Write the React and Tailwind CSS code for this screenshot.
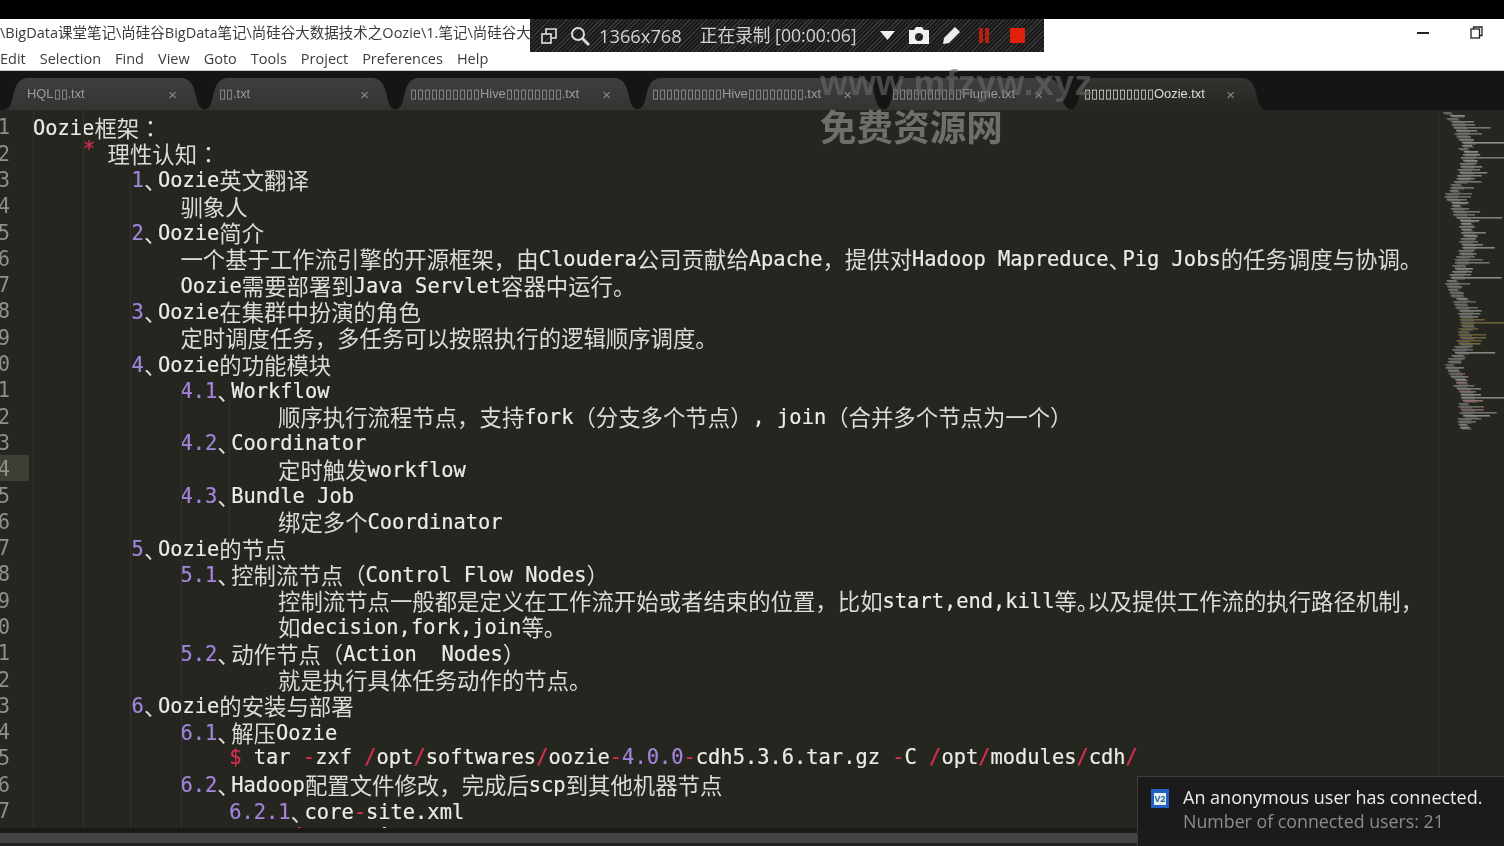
import React from "react";

const LINES = [
  [0, "Oozie框架："],
  [1, "* 理性认知："],
  [2, "1、Oozie英文翻译"],
  [3, "驯象人"],
  [2, "2、Oozie简介"],
  [3, "一个基于工作流引擎的开源框架，由Cloudera公司贡献给Apache，提供对Hadoop Mapreduce、Pig Jobs的任务调度与协调。"],
  [3, "Oozie需要部署到Java Servlet容器中运行。"],
  [2, "3、Oozie在集群中扮演的角色"],
  [3, "定时调度任务，多任务可以按照执行的逻辑顺序调度。"],
  [2, "4、Oozie的功能模块"],
  [3, "4.1、Workflow"],
  [5, "顺序执行流程节点，支持fork（分支多个节点）, join（合并多个节点为一个）"],
  [3, "4.2、Coordinator"],
  [5, "定时触发workflow"],
  [3, "4.3、Bundle Job"],
  [5, "绑定多个Coordinator"],
  [2, "5、Oozie的节点"],
  [3, "5.1、控制流节点（Control Flow Nodes）"],
  [5, "控制流节点一般都是定义在工作流开始或者结束的位置，比如start,end,kill等。以及提供工作流的执行路径机制，"],
  [5, "如decision,fork,join等。"],
  [3, "5.2、动作节点（Action  Nodes）"],
  [5, "就是执行具体任务动作的节点。"],
  [2, "6、Oozie的安装与部署"],
  [3, "6.1、解压Oozie"],
  [4, "$ tar -zxf /opt/softwares/oozie-4.0.0-cdh5.3.6.tar.gz -C /opt/modules/cdh/"],
  [3, "6.2、Hadoop配置文件修改，完成后scp到其他机器节点"],
  [4, "6.2.1、core-site.xml"],
];

const TOKEN = /(、)|(：)|(。(?=\S))|(\*)|([\u3000-\u303f\u4e00-\u9fff\uff00-\uffef]+?(?=、|：|。\S|[^\u3000-\u303f\u4e00-\u9fff\uff00-\uffef]|$))|((?<![A-Za-z0-9.])\d+(?:\.\d+)*)|([-/$])|([^、：。*\u3000-\u303f\u4e00-\u9fff\uff00-\uffef\d\-/$]+|\d)/g;

const CJK = "relative top-[2px] text-[22.4px] text-[#dcdcd6] [-webkit-text-stroke:0px] [font-family:'Noto_Sans_CJK_SC',sans-serif]";

function Code({ text }) {
  const parts = [...text.matchAll(TOKEN)];
  return parts.map((m, i) => {
    if (m[1]) return <span key={i} className={`${CJK} tracking-[-8.4px]`}>、</span>;
    if (m[2]) return <span key={i} className="relative top-[2px] text-[22.4px] text-[#dcdcd6] [-webkit-text-stroke:0px] [font-family:'Noto_Sans_CJK_TC',sans-serif]">：</span>;
    if (m[3]) return <span key={i} className={`${CJK} tracking-[-12px]`}>。</span>;
    if (m[4]) return <span key={i} className="relative -top-[5px] text-[#d92f50]">*</span>;
    if (m[5]) return <span key={i} className={CJK}>{m[5]}</span>;
    if (m[6]) return <span key={i} className="text-[#a284dc]">{m[6]}</span>;
    if (m[7]) return <span key={i} className="text-[#d92f50]">{m[7]}</span>;
    return <span key={i}>{m[0]}</span>;
  });
}

const MENU = ["Edit", "Selection", "Find", "View", "Goto", "Tools", "Project", "Preferences", "Help"];

const B = "\u25AF";
const TABS = [
  { name: `HQL${B}${B}.txt`, w: 205, pl: 25, pr: 30 },
  { name: `${B}${B}.txt`, w: 196, pl: 17, pr: 29 },
  { name: `${B.repeat(10)}Hive${B.repeat(8)}.txt`, w: 247, pl: 17, pr: 29 },
  { name: `${B.repeat(10)}Hive${B.repeat(8)}.txt`, w: 251, pl: 17, pr: 34 },
  { name: `${B.repeat(10)}Flume.txt`, w: 192, pl: 11, pr: 30 },
  { name: `${B.repeat(10)}Oozie.txt`, w: 200, pl: 16, pr: 33, active: true },
];

function Tab({ tab, first }) {
  const w = tab.w;
  const d = `M0,32 C7,32 9,27 11,19 C13,8 16,0 27,0 H${w - 27} C${w - 16},0 ${w - 13},8 ${w - 11},19 C${w - 9},27 ${w - 7},32 ${w},32 Z`;
  return (
    <div className={`relative h-[32px] shrink-0 flex items-center justify-between ${first ? "ml-[2px]" : "-ml-[5px]"}`} style={{ width: w, paddingLeft: tab.pl, paddingRight: tab.pr }}>
      <svg className="absolute inset-0" width={w} height="32" viewBox={`0 0 ${w} 32`}>
        <defs>
          <linearGradient id={`tabg${w}${tab.pl}`} x1="0" y1="0" x2="0" y2="1">
            <stop offset="0" stopColor={tab.active ? "#33332f" : "#3e3e3c"} />
            <stop offset="1" stopColor={tab.active ? "#262621" : "#343432"} />
          </linearGradient>
        </defs>
        <path d={d} fill={`url(#tabg${w}${tab.pl})`} />
      </svg>
      <span className={`relative text-[12.9px] whitespace-nowrap [font-family:'Liberation_Sans',sans-serif] ${tab.active ? "text-[#dedede]" : "text-[#9c9c9a]"}`}>{tab.name}</span>
      <span className="relative text-[15px] leading-none text-[#8a8a88] [font-family:'Liberation_Sans',sans-serif]">×</span>
    </div>
  );
}

function Minimap() {
  const rows = [];
  for (let i = 0; i < 106; i++) {
    const s = Math.sin(i * 12.9898) * 43758.5453;
    const r = s - Math.floor(s);
    const s2 = Math.sin(i * 78.233) * 12543.11;
    const r2 = s2 - Math.floor(s2);
    const indent = 3 + 15 * Math.abs(Math.sin(i / 9)) + r * 6;
    const w = 8 + r2 * (i % 5 === 0 ? 44 : 20);
    const tint = i > 68 && i < 78 ? "#8a7a40" : i > 82 && i < 100 && i % 3 === 0 ? "#a07a70" : "#9a9a96";
    rows.push(<rect key={i} x={indent} y={i * 3} width={w} height="1.6" fill={tint} opacity={0.55 + r * 0.35} />);
    rows.push(<rect key={`b${i}`} x={indent + 2} y={i * 3 + 1.4} width={Math.min(w, 12)} height="1.2" fill="#8a8a90" opacity="0.6" />);
  }
  return (
    <svg width="64" height="320" viewBox="0 0 64 320" className="absolute left-[1440px] top-[2px]">
      {rows}
    </svg>
  );
}

export default function App() {
  return (
    <div className="relative w-[1504px] h-[846px] overflow-hidden bg-black flex flex-col blur-[0.45px] [font-family:'Open_Sans','Noto_Sans_CJK_SC',sans-serif]">
      <div className="h-[19px] shrink-0 bg-black" />

      <div className="h-[27px] shrink-0 bg-white flex items-center justify-between overflow-hidden">
        <div className="w-[530px] overflow-hidden whitespace-nowrap text-[14.5px] text-[#3a3a3a] [font-family:'Open_Sans','Noto_Sans_CJK_SC',sans-serif]">
          \BigData课堂笔记\尚硅谷BigData笔记\尚硅谷大数据技术之Oozie\1.笔记\尚硅谷大数据技术
        </div>
        <div className="flex items-center gap-[41px] pr-[21px]">
          <div className="w-[12px] h-[2px] bg-[#222]" />
          <svg width="13" height="13" viewBox="0 0 13 13" fill="none" stroke="#222" strokeWidth="1.3">
            <rect x="1" y="3" width="8.5" height="9" />
            <path d="M3.5 3V1H12V9.5H9.5" />
          </svg>
        </div>
      </div>

      <div className="h-[24px] shrink-0 bg-white flex items-center gap-[14px] pt-[1px] text-[14.5px] text-[#3c3c3c]">
        {MENU.map((m) => (
          <span key={m}>{m}</span>
        ))}
      </div>

      <div className="h-[40px] shrink-0 bg-[#151515] border-t border-[#c8c8c8] flex items-end">
        {TABS.map((t, i) => (
          <Tab key={i} tab={t} first={i === 0} />
        ))}
      </div>

      <div className="relative flex-1 min-h-0 bg-[#262621] overflow-hidden pt-[3px] text-[20.4px] text-[#ecece6] [-webkit-text-stroke:0.2px] [font-family:'DejaVu_Sans_Mono','Noto_Sans_CJK_SC',monospace]">
        <div className="absolute left-[33px] top-0 bottom-0 w-px bg-[#32322e]" />
        <div className="absolute left-[83px] top-0 bottom-0 w-px bg-[#32322e]" />
        <div className="absolute left-[130px] top-[70px] bottom-0 w-px bg-[#32322e]" />
        <div className="absolute left-[181px] top-[280px] bottom-0 w-px bg-[#32322e]" />
        <div className="absolute left-[229px] top-[290px] h-[150px] w-px bg-[#32322e]" />
        <div className="absolute left-[1438px] top-0 bottom-0 w-px bg-[#32322e]" />
        {LINES.map(([lvl, text], i) => {
          const n = String(i + 1);
          return (
            <div key={i} className="flex h-[26.3px] items-center whitespace-pre">
              <div className={`relative w-[29px] h-full shrink-0 ${i === 13 ? "bg-[#3e3e35]" : ""}`}>
                <div className="w-[10px] h-full pt-[3px] flex items-center justify-end overflow-hidden text-[#8f908a] [-webkit-text-stroke:0px]">{n}</div>
              </div>
              <div className="pl-[4px]">
                <span className={["", "pl-[50px]", "pl-[98.6px]", "pl-[147.4px]", "pl-[196.2px]", "pl-[245px]"][lvl]}>
                  <Code text={text} />
                </span>
              </div>
            </div>
          );
        })}
        <Minimap />
        <div className="absolute left-[298px] bottom-[5px] w-[3px] h-px bg-[#d92f50]" />
        <div className="absolute left-[383px] bottom-[5px] w-[3px] h-px bg-[#dcdcd6]" />
        <div className="absolute inset-x-0 bottom-0 h-[5px] bg-[#1a1a18]" />
      </div>

      <div className="h-[10px] shrink-0 bg-[#444442]" />
      <div className="h-[3px] shrink-0 bg-[#242422]" />

      <div className="absolute left-[530px] top-[19px] w-[514px] h-[33px] flex items-center bg-[repeating-linear-gradient(135deg,#1a1a1a_0px,#1a1a1a_2px,#383838_2px,#383838_3px)] text-[#d2d2d2]">
        <svg className="ml-[11px]" width="16" height="16" viewBox="0 0 16 16" fill="none" stroke="#e0e0e0" strokeWidth="1.6">
          <rect x="1" y="6" width="9" height="9" />
          <path d="M5 6V1H15V10H10" />
        </svg>
        <svg className="ml-[13px]" width="20" height="20" viewBox="0 0 20 20" fill="none" stroke="#d8d8d8" strokeWidth="2">
          <circle cx="8" cy="8" r="6" />
          <path d="M12.5 12.5L19 19" strokeWidth="3" />
        </svg>
        <span className="ml-[9px] text-[18.3px] whitespace-nowrap">1366x768</span>
        <span className="ml-[18px] w-[180px] text-[17.7px] whitespace-nowrap">正在录制 [00:00:06]</span>
        <svg width="15" height="9" viewBox="0 0 15 9"><path d="M0 0H15L7.5 9Z" fill="#f0f0f0" /></svg>
        <svg className="ml-[13px]" width="22" height="17" viewBox="0 0 22 17">
          <path fillRule="evenodd" d="M1 3H6L8 0H14L16 3H21V17H1ZM11 6A4 4 0 1 0 11 14A4 4 0 1 0 11 6Z" fill="#f2f2f2" />
        </svg>
        <svg className="ml-[11px]" width="20" height="19" viewBox="0 0 20 19">
          <path d="M14 1L19 6L8 17L2 18L3 12Z" fill="#ececec" />
        </svg>
        <div className="ml-[18px] flex gap-[2px]">
          <div className="w-[4px] h-[15px] bg-[#b3200f]" />
          <div className="w-[4px] h-[15px] bg-[#b3200f]" />
        </div>
        <div className="ml-[21px] w-[15px] h-[15px] bg-[#e0200c]" />
      </div>

      <div className="absolute left-[820px] top-[59px] text-[35.6px] leading-[48px] font-bold whitespace-nowrap text-[#6a6a68] opacity-60 tracking-[0.5px] [font-family:'Liberation_Sans',sans-serif]">
        www.mfzyw.xyz
      </div>
      <div className="absolute left-[820px] top-[103px] text-[36.6px] leading-[46px] font-bold whitespace-nowrap text-[#6e6e6c] [font-family:'Noto_Sans_CJK_SC',sans-serif]">
        免费资源网
      </div>

      <div className="absolute left-[1137px] top-[776px] w-[367px] h-[70px] bg-[#1b1b1b] border-t border-l border-[#3c3c3a] flex items-start pl-[13px] pt-[8px] gap-[14px] [font-family:'Open_Sans',sans-serif]">
        <div className="w-[18px] h-[19px] mt-[4px] shrink-0 bg-[#1f62c4] flex items-center justify-center">
          <div className="w-[12px] h-[12px] bg-[#e4eef2] text-[9px] leading-[12px] font-bold text-center text-[#2a6a9a]">V2</div>
        </div>
        <div className="flex flex-col">
          <span className="text-[18px] leading-[24px] text-[#ebebeb] whitespace-nowrap">An anonymous user has connected.</span>
          <span className="text-[17.8px] leading-[24px] text-[#8c8c8c] whitespace-nowrap">Number of connected users: 21</span>
        </div>
      </div>
    </div>
  );
}
